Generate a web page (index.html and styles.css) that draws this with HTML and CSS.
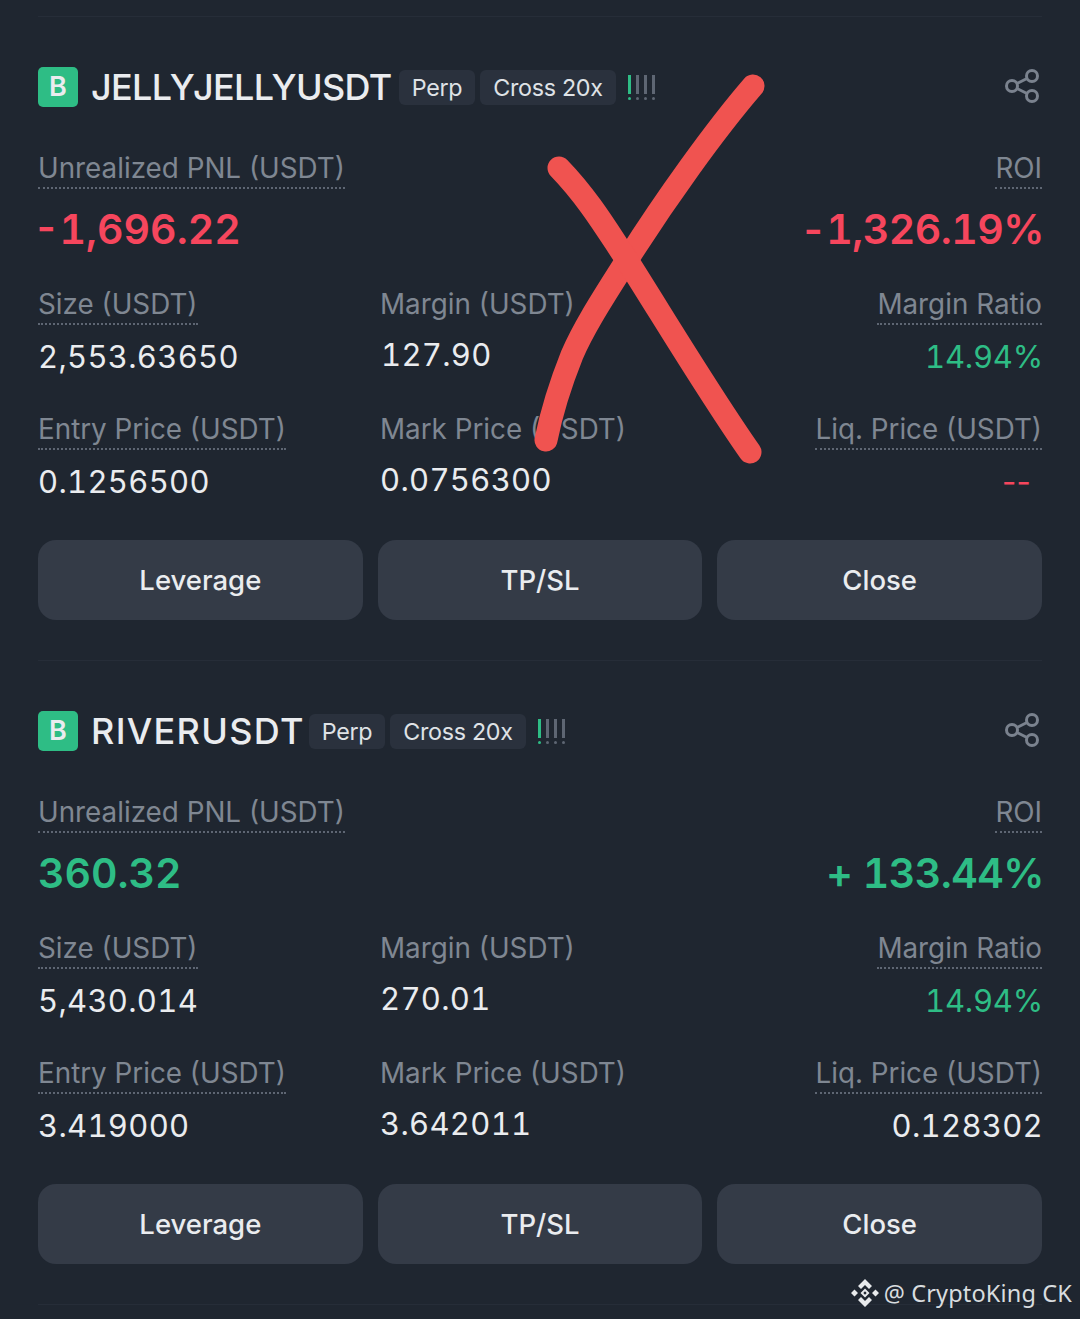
FILE: index.html
```html
<!DOCTYPE html>
<html lang="en">
<head>
<meta charset="utf-8">
<title>Positions</title>
<link rel="stylesheet" href="styles.css">
</head>
<body>
<main class="page">
  <section class="card">
    <header class="head">
      <span class="badge">B</span>
      <h2 class="symbol">JELLYJELLYUSDT</h2>
      <span class="tag">Perp</span>
      <span class="tag">Cross 20x</span>
      <span class="risk"><i class="on"></i><i></i><i></i><i></i></span>
      <svg class="share" viewBox="0 0 36 36"><circle cx="27" cy="7" r="5.5"/><circle cx="7" cy="17" r="5.5"/><circle cx="27" cy="27" r="5.5"/><path d="M12 14.500 22 9.500M12 19.500 22 24.500"/></svg>
    </header>
    <div class="pnl">
      <div><span class="label">Unrealized PNL (USDT)</span><div class="big red neg">-1,696.22</div></div>
      <div class="right"><span class="label">ROI</span><div class="big red">-1,326.19%</div></div>
    </div>
    <div class="grid">
      <div><span class="label">Size (USDT)</span><div class="val">2,553.63650</div></div>
      <div class="mid"><span class="label plain">Margin (USDT)</span><div class="val nudge">127.90</div></div>
      <div class="right"><span class="label">Margin Ratio</span><div class="val green">14.94%</div></div>
      <div><span class="label">Entry Price (USDT)</span><div class="val">0.1256500</div></div>
      <div class="mid"><span class="label plain">Mark Price (USDT)</span><div class="val">0.0756300</div></div>
      <div class="right"><span class="label">Liq. Price (USDT)</span><div class="val dash">--</div></div>
    </div>
    <div class="actions"><button class="btn">Leverage</button><button class="btn">TP/SL</button><button class="btn">Close</button></div>
  </section>
  <section class="card">
    <header class="head">
      <span class="badge">B</span>
      <h2 class="symbol loose">RIVERUSDT</h2>
      <span class="tag">Perp</span>
      <span class="tag">Cross 20x</span>
      <span class="risk"><i class="on"></i><i></i><i></i><i></i></span>
      <svg class="share" viewBox="0 0 36 36"><circle cx="27" cy="7" r="5.5"/><circle cx="7" cy="17" r="5.5"/><circle cx="27" cy="27" r="5.5"/><path d="M12 14.500 22 9.500M12 19.500 22 24.500"/></svg>
    </header>
    <div class="pnl">
      <div><span class="label">Unrealized PNL (USDT)</span><div class="big green">360.32</div></div>
      <div class="right"><span class="label">ROI</span><div class="big green">+ 133.44%</div></div>
    </div>
    <div class="grid">
      <div><span class="label">Size (USDT)</span><div class="val">5,430.014</div></div>
      <div class="mid"><span class="label plain">Margin (USDT)</span><div class="val">270.01</div></div>
      <div class="right"><span class="label">Margin Ratio</span><div class="val green">14.94%</div></div>
      <div><span class="label">Entry Price (USDT)</span><div class="val">3.419000</div></div>
      <div class="mid"><span class="label plain">Mark Price (USDT)</span><div class="val">3.642011</div></div>
      <div class="right"><span class="label">Liq. Price (USDT)</span><div class="val">0.128302</div></div>
    </div>
    <div class="actions"><button class="btn">Leverage</button><button class="btn">TP/SL</button><button class="btn">Close</button></div>
  </section>
  <div class="rule"></div>
</main>
<svg class="cross" viewBox="0 0 1080 1319" aria-hidden="true">
  <path d="M753 86C715 130 665 200 627 260C605 295 585 325 572 355C560 385 552 410 546 440"/>
  <path d="M559 168C590 200 610 235 627 260C665 320 710 395 750 452"/>
</svg>
<div class="mark">
  <svg class="logo" viewBox="0 0 28 28"><path d="M14 0l7 7-3 3-4-4-4 4-3-3zM14 28l7-7-3-3-4 4-4-4-3 3zM3.500 10.500 7 14l-3.500 3.500L0 14zM24.500 10.500 28 14l-3.500 3.500L21 14zM14 9.500l4.500 4.500-4.500 4.500-4.500-4.500zM14 12.300 12.300 14l1.700 1.700 1.700-1.700z" fill-rule="evenodd"/></svg>
  <span>@ CryptoKing CK</span>
</div>
</body>
</html>
```
FILE: styles.css
```css
* { box-sizing: border-box; }
html, body { margin: 0; height: 1319px; overflow: hidden; background: #1f2630; }
body { position: relative; font-family: Inter, sans-serif; color: #eaecef; }
.page { padding: 16px 38px 0; }
.card { height: 644px; border-top: 1px solid #262d38; padding-top: 50px; }
.rule { border-top: 1px solid #262d38; }
.head { display: flex; align-items: center; height: 40px; }
.badge { width: 40px; height: 40px; border-radius: 5px; background: #2ebd85; color: #eaecef; font: 600 27px/40px Inter, sans-serif; text-align: center; margin-right: 13px; }
.symbol { margin: 0 7px 0 0; font-size: 36px; font-weight: 500; line-height: 40px; color: #eaecef; letter-spacing: -0.65px; }
.symbol.loose { letter-spacing: 1.3px; margin-right: 4px; }
.tag { height: 35px; line-height: 35px; padding: 0 13px; margin-right: 5px; border-radius: 6px; background: #2a313d; font-size: 23.300px; color: #dfe2e6; letter-spacing: -0.3px; }
.risk { display: flex; gap: 5px; margin-left: 7px; height: 25px; }
.risk i { position: relative; display: block; width: 3px; height: 19px; background: #5e6673; }
.risk i::after { content: ""; position: absolute; left: 0; top: 22px; width: 3px; height: 3px; border-radius: 50%; background: #5e6673; }
.risk i.on, .risk i.on::after { background: #2ebd85; }
.share { margin-left: auto; margin-right: 1px; width: 36px; height: 36px; fill: none; stroke: #7a828e; stroke-width: 3; }
.pnl { display: flex; justify-content: space-between; margin-top: 41px; }
.right { text-align: right; }
.label { display: inline-block; font-size: 27.800px; line-height: 40px; height: 41px; color: #7f8792; border-bottom: 2px dotted #5e6673; }
.label.plain { border-bottom-color: transparent; }
.big { font-size: 41px; font-weight: 600; line-height: 56px; margin-top: 12px; font-variant-numeric: tabular-nums; }
.big.neg { margin-left: -5px; }
.right .big { letter-spacing: -0.5px; margin-right: -2px; }
.red { color: #f6465d; }
.green { color: #2ebd85; }
.grid { display: grid; grid-template-columns: 342px 1fr 1fr; row-gap: 30px; margin-top: 27px; }
.val { font-size: 31px; line-height: 44px; margin-top: 10px; color: #eaecef; font-variant-numeric: tabular-nums; letter-spacing: 0.3px; }
.val.green { color: #2ebd85; letter-spacing: -0.2px; }
.val.dash { color: #f6465d; padding-right: 12px; font-variant-numeric: normal; }
.right .val { margin-right: -1px; }
.mid .val { margin-top: 8px; }
.mid .val.nudge { padding-left: 1px; }
.actions { display: flex; gap: 15px; margin-top: 36px; }
.btn { flex: 1; height: 80px; border: 0; border-radius: 18px; background: #343b47; color: #eaecef; font: 500 27.500px Inter, sans-serif; }
.cross { position: absolute; left: 0; top: 0; width: 1080px; height: 1319px; fill: none; stroke: #f05350; stroke-width: 23; stroke-linecap: round; pointer-events: none; }
.mark { position: absolute; right: 8px; top: 1276px; display: flex; align-items: center; gap: 5px; font: 23.500px/34px "Noto Sans", sans-serif; color: #d8dcdf; letter-spacing: 0.15px; }
.logo { width: 28px; height: 28px; fill: #e8eaec; }
```
